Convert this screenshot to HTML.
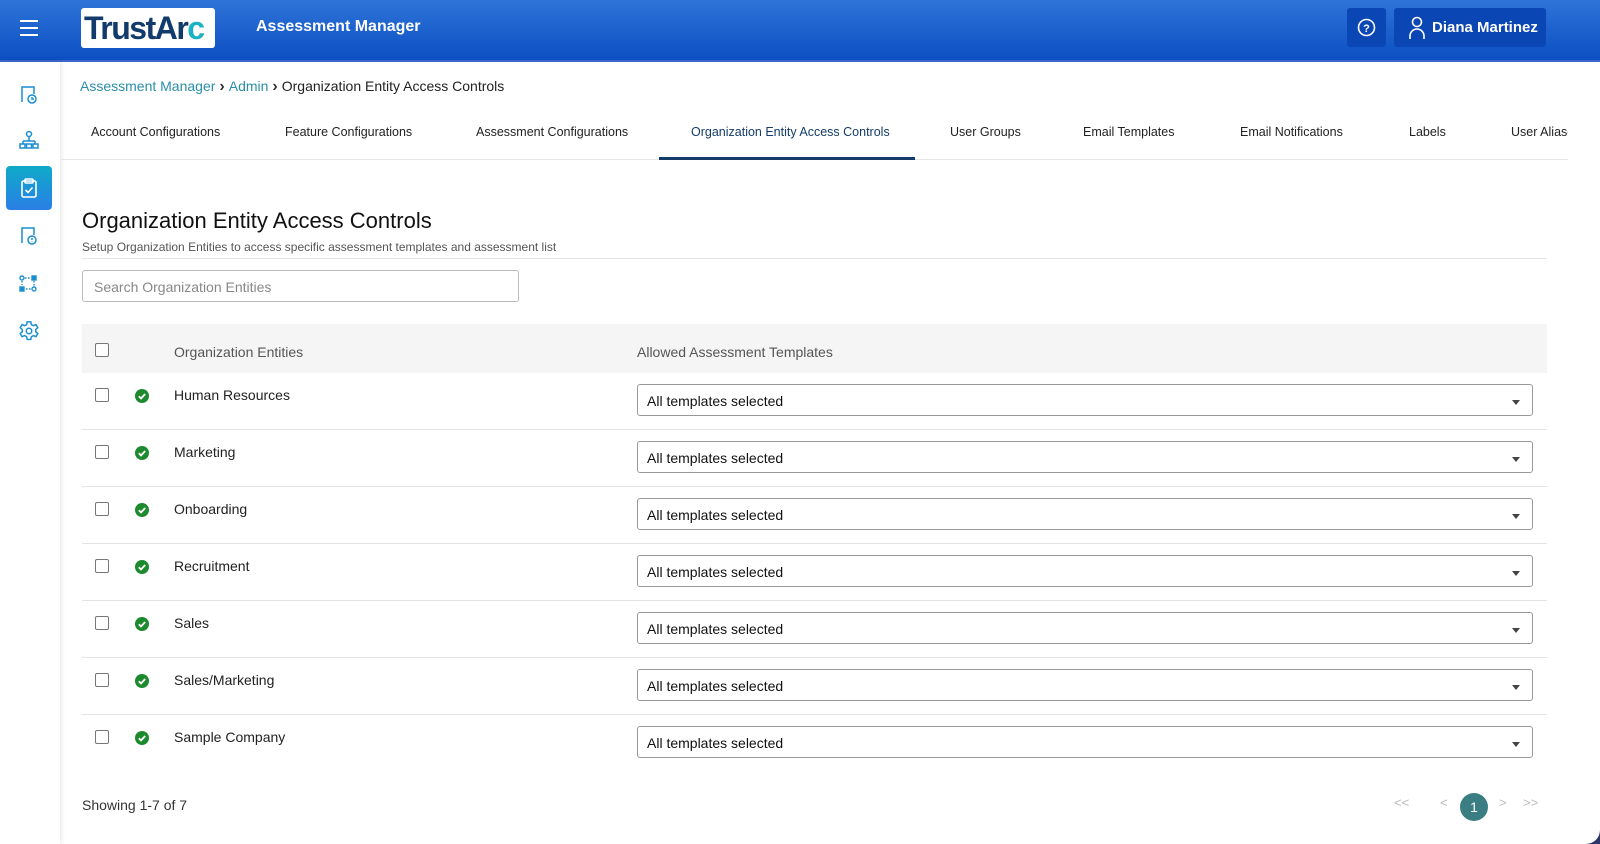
<!DOCTYPE html>
<html><head><meta charset="utf-8"><style>
*{box-sizing:border-box;margin:0;padding:0}
body{width:1600px;height:844px;overflow:hidden;font-family:"Liberation Sans",sans-serif;background:#fff;position:relative;color:#222}
.hdr{position:absolute;left:0;top:0;width:1600px;height:62px;background:linear-gradient(#2f74d8,#0b4fc3);border-bottom:2px solid #3d66c9}
.burger{position:absolute;left:20px;top:20px;width:18px}
.burger i{display:block;height:2px;background:#fff;margin-bottom:5px}
.logo{position:absolute;left:81px;top:8px;width:134px;height:40px;background:#fff;border-radius:3px;font-size:32px;font-weight:bold;color:#123a6b;letter-spacing:-1.5px;line-height:40px;padding-left:3px}
.logo span{color:#1ab3c4}
.title{position:absolute;left:256px;top:18px;color:#fff;font-size:16px;font-weight:bold}
.btn{position:absolute;top:8px;height:39px;background:#0b46b5;border-radius:3px;color:#fff}
.side{position:absolute;left:0;top:62px;width:60px;height:782px;background:#fff;box-shadow:2px 0 4px rgba(0,0,0,.08)}
.side svg{position:absolute;left:18px}
.act{position:absolute;left:6px;top:104px;width:46px;height:44px;border-radius:4px;background:linear-gradient(#0eaac8,#2b7fe6)}
.main{position:absolute;left:61px;top:62px;width:1507px;height:782px;overflow:hidden}
.bc{position:absolute;left:19px;top:16px;font-size:14px;color:#222}
.bc a{color:#2a8fa8}
.bc b{display:inline-block;margin:0 4px;font-size:16px;color:#333}
.tabs{position:absolute;left:0;top:52px;width:1510px;height:46px;border-bottom:1px solid #e6e6e6;font-size:12.5px;white-space:nowrap}
.tabs span{position:absolute;top:11px}
.tabs .on{border-bottom:3px solid #143c68;height:35px;color:#143c68}
h1{position:absolute;left:21px;top:146px;font-size:22px;font-weight:normal;color:#111}
.sub{position:absolute;left:21px;top:178px;font-size:12px;color:#555;width:1465px;border-bottom:1px solid #e5e5e5;padding-bottom:4px}
.search{position:absolute;left:21px;top:208px;width:437px;height:32px;border:1px solid #bbb;border-radius:3px;font-size:14px;color:#888;padding:8px 11px}
.th{position:absolute;left:21px;top:262px;width:1465px;height:49px;background:#f5f5f5;font-size:14px;color:#555}
.cb{position:absolute;width:14px;height:14px;border:1px solid #777;border-radius:2px;background:#fff}
.row{position:absolute;left:21px;width:1465px;height:57px;border-bottom:1px solid #e3e3e3;font-size:14px}
.ok{position:absolute;left:53px;top:16px}
.sel{position:absolute;left:555px;top:11px;width:896px;height:32px;border:1px solid #999;border-radius:3px;padding:8px 9px;font-size:14px;color:#111}
.sel:after{content:"";position:absolute;right:12px;top:15px;border:4px solid transparent;border-top:5px solid #444}
.foot{position:absolute;left:21px;top:735px;font-size:14px;color:#333}
.pg{position:absolute;top:733px;font-size:13px;color:#bbb}
</style></head><body>
<div class="hdr">
<div class="burger"><i></i><i></i><i></i></div>
<div class="logo">TrustA<span style="color:#123a6b">r</span><span>c</span></div>
<div class="title">Assessment Manager</div>
<div class="btn" style="left:1347px;width:39px"><svg width="39" height="39" viewBox="0 0 39 39"><circle cx="19.5" cy="19.5" r="8" fill="none" stroke="#fff" stroke-width="1.6"/><text x="19.5" y="24" font-size="11" fill="#fff" text-anchor="middle" font-family="Liberation Sans" font-weight="bold">?</text></svg></div>
<div class="btn" style="left:1394px;width:152px"><svg width="30" height="39" viewBox="0 0 30 39" style="position:absolute;left:8px"><circle cx="15" cy="14" r="4.5" fill="none" stroke="#fff" stroke-width="1.6"/><path d="M8 31v-3a7 7 0 0 1 14 0v3" fill="none" stroke="#fff" stroke-width="1.6"/></svg><span style="position:absolute;left:38px;top:11px;font-size:15px;font-weight:bold">Diana Martinez</span></div>
</div>
<div class="side">
<svg style="top:22px" width="22" height="22" viewBox="0 0 22 22" fill="none" stroke="#1a8fd0" stroke-width="1.5"><path d="M4 18V3h12v7"/><circle cx="14" cy="15" r="4"/><path d="M14 13v2h2"/></svg>
<svg style="top:67px" width="22" height="22" viewBox="0 0 22 22" fill="none" stroke="#1a8fd0" stroke-width="1.5"><circle cx="11" cy="5" r="2.5"/><path d="M11 8v4M5 12h12M5 12v3M17 12v3"/><rect x="2" y="15" width="5" height="4"/><rect x="8.5" y="15" width="5" height="4"/><rect x="15" y="15" width="5" height="4"/></svg>
<div class="act"><svg style="left:13px;top:11px" width="20" height="22" viewBox="0 0 20 22" fill="none" stroke="#fff" stroke-width="1.6"><rect x="3" y="4" width="14" height="16" rx="1.5"/><rect x="6" y="2" width="8" height="4" rx="1"/><path d="M6.5 13l2.5 2.5 4.5-5"/></svg></div>
<svg style="top:163px" width="22" height="22" viewBox="0 0 22 22" fill="none" stroke="#1a8fd0" stroke-width="1.5"><path d="M4 18V3h12v7"/><circle cx="14" cy="15" r="4"/><path d="M14 13v2M14 16.5v.5"/></svg>
<svg style="top:211px" width="22" height="22" viewBox="0 0 22 22" stroke="#1a8fd0" stroke-width="1.4"><circle cx="4" cy="5" r="2" fill="none"/><rect x="14" y="3" width="4" height="4" fill="#1a8fd0"/><rect x="2" y="14" width="4" height="4" fill="#1a8fd0"/><circle cx="16" cy="16" r="2" fill="none"/><path d="M7 5h5M4 8v4M16 8v5M8 16h5" stroke-dasharray="1.5 1.5"/></svg>
<svg style="top:258px" width="22" height="22" viewBox="0 0 24 24" fill="none" stroke="#1a8fd0" stroke-width="1.6"><circle cx="12" cy="12" r="3"/><path d="M10 2h4l.6 3 2.2 1.2 2.8-1.2 2 3.4-2.3 2v2.4l2.3 2-2 3.4-2.8-1.2-2.2 1.2-.6 3h-4l-.6-3-2.2-1.2-2.8 1.2-2-3.4 2.3-2v-2.4l-2.3-2 2-3.4 2.8 1.2L9.4 5z"/></svg>
</div>
<div class="main">
<div class="bc"><a>Assessment Manager</a><b>&#8250;</b><a>Admin</a><b>&#8250;</b>Organization Entity Access Controls</div>
<div class="tabs">
<span style="left:30px">Account Configurations</span>
<span style="left:224px">Feature Configurations</span>
<span style="left:415px">Assessment Configurations</span>
<span class="on" style="left:598px;width:256px;padding-left:32px">Organization Entity Access Controls</span>
<span style="left:889px">User Groups</span>
<span style="left:1022px">Email Templates</span>
<span style="left:1179px">Email Notifications</span>
<span style="left:1348px">Labels</span>
<span style="left:1450px">User Aliases</span>
</div>
<h1>Organization Entity Access Controls</h1>
<div class="sub">Setup Organization Entities to access specific assessment templates and assessment list</div>
<div class="search">Search Organization Entities</div>
<div class="th"><div class="cb" style="left:13px;top:19px"></div><span style="position:absolute;left:92px;top:20px">Organization Entities</span><span style="position:absolute;left:555px;top:20px">Allowed Assessment Templates</span></div>
<div class="row" style="top:311px"><div class="cb" style="left:13px;top:15px"></div><svg class="ok" width="14" height="14" viewBox="0 0 14 14"><circle cx="7" cy="7" r="7" fill="#1e8a2e"/><path d="M3.8 7.2l2.2 2.2 4.2-4.4" fill="none" stroke="#fff" stroke-width="1.8"/></svg><span style="position:absolute;left:92px;top:14px">Human Resources</span><div class="sel">All templates selected</div></div>
<div class="row" style="top:368px"><div class="cb" style="left:13px;top:15px"></div><svg class="ok" width="14" height="14" viewBox="0 0 14 14"><circle cx="7" cy="7" r="7" fill="#1e8a2e"/><path d="M3.8 7.2l2.2 2.2 4.2-4.4" fill="none" stroke="#fff" stroke-width="1.8"/></svg><span style="position:absolute;left:92px;top:14px">Marketing</span><div class="sel">All templates selected</div></div>
<div class="row" style="top:425px"><div class="cb" style="left:13px;top:15px"></div><svg class="ok" width="14" height="14" viewBox="0 0 14 14"><circle cx="7" cy="7" r="7" fill="#1e8a2e"/><path d="M3.8 7.2l2.2 2.2 4.2-4.4" fill="none" stroke="#fff" stroke-width="1.8"/></svg><span style="position:absolute;left:92px;top:14px">Onboarding</span><div class="sel">All templates selected</div></div>
<div class="row" style="top:482px"><div class="cb" style="left:13px;top:15px"></div><svg class="ok" width="14" height="14" viewBox="0 0 14 14"><circle cx="7" cy="7" r="7" fill="#1e8a2e"/><path d="M3.8 7.2l2.2 2.2 4.2-4.4" fill="none" stroke="#fff" stroke-width="1.8"/></svg><span style="position:absolute;left:92px;top:14px">Recruitment</span><div class="sel">All templates selected</div></div>
<div class="row" style="top:539px"><div class="cb" style="left:13px;top:15px"></div><svg class="ok" width="14" height="14" viewBox="0 0 14 14"><circle cx="7" cy="7" r="7" fill="#1e8a2e"/><path d="M3.8 7.2l2.2 2.2 4.2-4.4" fill="none" stroke="#fff" stroke-width="1.8"/></svg><span style="position:absolute;left:92px;top:14px">Sales</span><div class="sel">All templates selected</div></div>
<div class="row" style="top:596px"><div class="cb" style="left:13px;top:15px"></div><svg class="ok" width="14" height="14" viewBox="0 0 14 14"><circle cx="7" cy="7" r="7" fill="#1e8a2e"/><path d="M3.8 7.2l2.2 2.2 4.2-4.4" fill="none" stroke="#fff" stroke-width="1.8"/></svg><span style="position:absolute;left:92px;top:14px">Sales/Marketing</span><div class="sel">All templates selected</div></div>
<div class="row" style="top:653px;border-bottom:none"><div class="cb" style="left:13px;top:15px"></div><svg class="ok" width="14" height="14" viewBox="0 0 14 14"><circle cx="7" cy="7" r="7" fill="#1e8a2e"/><path d="M3.8 7.2l2.2 2.2 4.2-4.4" fill="none" stroke="#fff" stroke-width="1.8"/></svg><span style="position:absolute;left:92px;top:14px">Sample Company</span><div class="sel">All templates selected</div></div>
<div class="foot">Showing 1-7 of 7</div>
<span class="pg" style="left:1333px">&lt;&lt;</span><span class="pg" style="left:1379px">&lt;</span>
<div style="position:absolute;left:1399px;top:731px;width:28px;height:28px;border-radius:50%;background:#3a7d82;color:#fff;font-size:14px;text-align:center;line-height:28px">1</div>
<span class="pg" style="left:1438px">&gt;</span><span class="pg" style="left:1462px">&gt;&gt;</span>
</div>
<svg style="position:absolute;left:1586px;top:830px" width="14" height="14"><path d="M14 0V14H0A14 14 0 0 0 14 0z" fill="#2b3568"/></svg>
</body></html>
